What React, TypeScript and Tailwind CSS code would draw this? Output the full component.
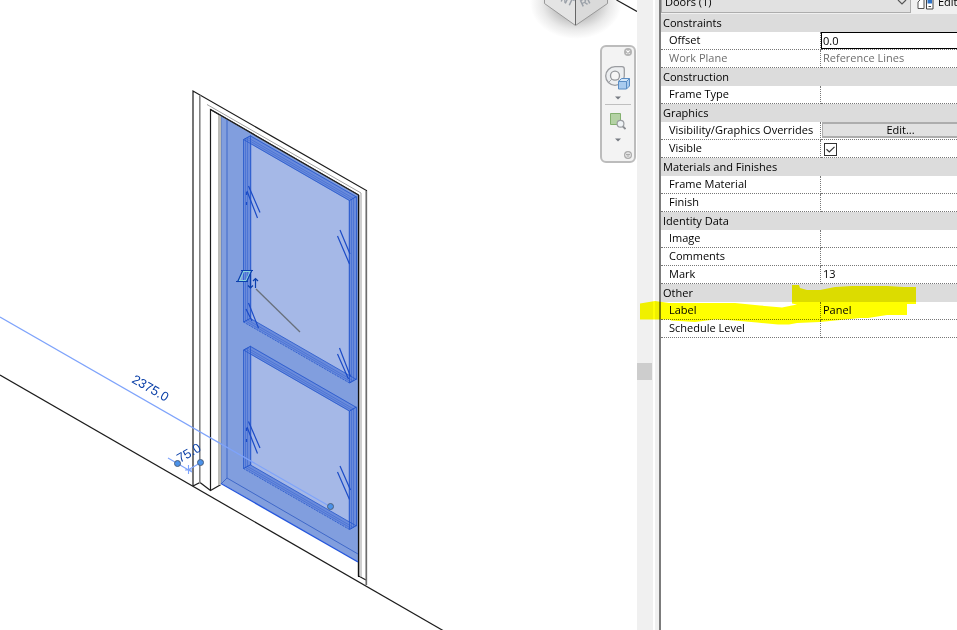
import { useState } from "react";
import clsx from "clsx";

type Row = {
  label: string;
  value?: string;
  kind?: "text" | "button" | "checkbox";
  active?: boolean;
  disabled?: boolean;
};

const groups: { title: string; rows: Row[] }[] = [
  {
    title: "Constraints",
    rows: [
      { label: "Offset", value: "0.0", active: true },
      { label: "Work Plane", value: "Reference Lines", disabled: true },
    ],
  },
  { title: "Construction", rows: [{ label: "Frame Type" }] },
  {
    title: "Graphics",
    rows: [
      { label: "Visibility/Graphics Overrides", value: "Edit...", kind: "button" },
      { label: "Visible", kind: "checkbox" },
    ],
  },
  {
    title: "Materials and Finishes",
    rows: [{ label: "Frame Material" }, { label: "Finish" }],
  },
  {
    title: "Identity Data",
    rows: [
      { label: "Image" },
      { label: "Comments" },
      { label: "Mark", value: "13" },
    ],
  },
  {
    title: "Other",
    rows: [{ label: "Label", value: "Panel" }, { label: "Schedule Level" }],
  },
];

// One glazed opening of the door, given by the heights of its left corners.
function GlassPane({ top, bottom }: { top: number; bottom: number }) {
  const insets = [0, 2, 4, 7];
  return (
    <g fill="none" stroke="#2456cc" strokeWidth="1">
      <path
        d={`M243.5 ${top}L251 ${top - 4}L356.5 ${top + 57}V${bottom + 57}L349.5 ${bottom + 61}L243.5 ${bottom}Z`}
        fill="#6a8bdb"
        stroke="none"
      />
      <path
        d={`M251.5 ${top + 5}L348.5 ${top + 61}V${bottom + 53}L251.5 ${bottom - 3}Z`}
        fill="#a5b8e7"
        stroke="none"
      />
      {insets.map((n) => (
        <g key={n} strokeOpacity={n === 0 || n === 7 ? 0.8 : 0.4}>
          <path d={`M${243.5 + n} ${top - n / 2}V${bottom - n / 2}`} />
          <path d={`M${349.5 + n} ${top + 61 - n / 2}V${bottom + 61 - n / 2}`} />
          <path d={`M${243.5 + n} ${top - n / 2}L${349.5 + n} ${top + 61 - n / 2}`} />
          <path
            d={`M${243.5 + n} ${bottom - n / 2}L${349.5 + n} ${bottom + 61 - n / 2}`}
            strokeDasharray={n === 0 ? "2 1" : undefined}
          />
        </g>
      ))}
      <path
        d={`M243.5 ${top}L251 ${top - 4}M349.5 ${top + 61}L356.5 ${top + 57}M243.5 ${bottom}L251 ${bottom - 4}M349.5 ${bottom + 61}L356.5 ${bottom + 57}`}
      />
    </g>
  );
}

function DoorView() {
  return (
    <svg
      className="absolute inset-0 h-full w-full"
      fontFamily="'Liberation Sans', Arial, sans-serif"
      role="img"
      aria-label="Door in 3D view"
    >
      <g fill="none" stroke="#1c1c1c" strokeWidth="1.2">
        <path d="M0 375L443 630.5" />
        <path d="M616.5 0L637 11.5" />
        <path d="M193 486V91L366.5 190.5V585" />
        <path d="M210.5 490V109.5L358.5 195V576L366 580" />
        <path d="M193 486L200 482.5L210.5 490.5L221 484.5" />
      </g>
      <path d="M199.8 95V483" stroke="#858585" strokeWidth="1.6" />
      <path d="M207 104.5L361 193V577" stroke="#a0a0a0" fill="none" />
      <path d="M366.2 191V585" stroke="#777" strokeWidth="1.4" />
      <path d="M219.5 115V485" stroke="#bcbcb8" strokeWidth="3" />

      <path d="M221 116L358 195V562L221 483Z" fill="#819ede" />
      <path d="M221.5 117V483" stroke="#6d8bc9" />
      <path d="M358.6 195V577" stroke="#111" strokeWidth="1.4" />
      <path d="M210.5 109.5L358.5 195" stroke="#222" strokeWidth="1.3" />
      <g fill="none" stroke="#3f68c8">
        <path d="M227 120V478L358 554" />
        <path d="M221 484L227 478" />
      </g>
      <path d="M221 483.5L358 562" stroke="#2456dc" strokeWidth="1.4" />

      <GlassPane top={139.5} bottom={322} />
      <GlassPane top={350} bottom={468.5} />

      {/* glass hatch */}
      <g stroke="#1b4bc6" strokeWidth="1.2">
        <path d="M248.5 186L260 212.5M247 191L257.5 218M246.5 192V195M246.5 202V205" />
        <path d="M340 230L350 254M337.5 236L349.5 264" />
        <path d="M248.5 303L258.5 328M246 309L252 321" />
        <path d="M339.5 348L350.5 376.5M337.5 354L348.5 379" />
        <path d="M248.5 421.5L260 448M247 427L257.5 453.5M246.5 428V431M246.5 439V442" />
        <path d="M340 466L350.5 490M337.5 472L349.5 499.5" />
      </g>

      {/* flip control and swing line */}
      <path d="M256 289L300 332" stroke="#68707c" strokeWidth="1.3" />
      <g fill="none" stroke="#0a3fae" strokeWidth="1.2">
        <path d="M243.5 271.5H250.5L246 280.5H239.5Z" stroke="#8ad4dc" />
        <path d="M241 270.5H253M236 281.5H248M242.5 271L237.5 282M252 270L246.5 282" />
        <path d="M250.5 274V288M248 285.5L250.5 288L253 285.5" />
        <path d="M255.5 288V278.5M253 281L255.5 278.5L258 281" />
      </g>

      {/* temporary dimensions */}
      <g fill="none" stroke="#7ea3fb" strokeWidth="1.1">
        <path d="M0 317L330 506.5" />
        <path d="M168 458L192 472M188 470L200 463M188.5 465V474M185 470H192" />
      </g>
      <g fill="#4b92ea" stroke="#4d617d">
        <circle cx="177.5" cy="463.5" r="3" />
        <circle cx="200.5" cy="462.5" r="3" />
        <circle cx="330.5" cy="506.5" r="3" />
      </g>
      <g fill="#0b40a8" fontSize="13">
        <text transform="translate(131 382) rotate(30)">2375.0</text>
        <text transform="translate(180 463) rotate(-30)">75.0</text>
      </g>

      {/* view cube */}
      <defs>
        <radialGradient id="cubeShadow">
          <stop offset="0.4" stopColor="#888" stopOpacity="0.6" />
          <stop offset="0.75" stopColor="#999" stopOpacity="0.2" />
          <stop offset="1" stopColor="#999" stopOpacity="0" />
        </radialGradient>
      </defs>
      <ellipse cx="576" cy="3" rx="46" ry="36" fill="url(#cubeShadow)" />
      <path d="M544.5 -1V3.5L575.5 25.5V-1Z" fill="#e4e4e4" />
      <path d="M607.5 -1V3.5L575.5 25.5V-1Z" fill="#dadada" />
      <path d="M544.5 0V3.5L575.5 25.5L607.5 3.5V0" fill="none" stroke="#999" />
      <path d="M575.5 0V25" stroke="#666" />
      <g fill="#9aa0a8" fontSize="10" fontWeight="bold">
        <text transform="translate(560 1) rotate(25)">NT</text>
        <text transform="translate(582 7) rotate(-25)">RI</text>
      </g>
    </svg>
  );
}

function DownArrow() {
  return (
    <svg className="h-1 w-1.5" viewBox="0 0 6 4" aria-hidden="true">
      <path d="M0 0.5H6L3 3.5Z" fill="#777b82" />
    </svg>
  );
}

function NavigationBar() {
  return (
    <nav className="absolute top-[45px] right-px flex h-[118px] w-9 flex-col items-center rounded-md border-2 border-[#bcbcbc] bg-[#f3f3f3]">
      <button aria-label="Close" className="mt-px mr-0.5 self-end">
        <svg className="size-2" viewBox="0 0 8 8">
          <circle cx="4" cy="4" r="4" fill="#b4b4b4" />
          <path d="M2.4 2.4L5.6 5.6M5.6 2.4L2.4 5.6" stroke="#fff" strokeWidth="1.1" />
        </svg>
      </button>
      <button aria-label="Steering wheel" className="mt-2.5">
        <svg className="h-6 w-[26px]" viewBox="0 0 26 24" fill="none">
          <path d="M10 0.7H17Q19.3 0.7 19.3 3V10A9.3 9.3 0 1 1 10 0.7Z" fill="#eceef0" stroke="#9a9ca0" strokeWidth="1.3" />
          <circle cx="10" cy="9.7" r="4.5" fill="#f6f6f6" stroke="#96989c" strokeWidth="1.3" />
          <path d="M7 13L4 16M13 13L15 16" stroke="#a5a7aa" />
          <path d="M13.5 15.5L16.5 12.5H24.5V20L21.5 23H13.5Z" fill="#a9cbee" stroke="#5a8dc4" />
          <path d="M14.5 15L17 13H23.5L21.5 15Z" fill="#d5e7f8" />
          <path d="M13.5 15.5H21.5V23M21.5 15.5L24.5 12.5" stroke="#5a8dc4" />
        </svg>
      </button>
      <button aria-label="Steering wheel options" className="mt-1.5 flex">
        <DownArrow />
      </button>
      <hr className="mt-1 w-[26px] border-[#bfbfbf]" />
      <button aria-label="Zoom" className="mt-2">
        <svg className="h-[17px] w-4" viewBox="0 0 16 17" fill="none">
          <path d="M0.5 0.5H10.5V11.5H0.5Z" fill="#b4d2a4" stroke="#83b06f" />
          <path d="M12.5 13L15.5 16" stroke="#8b8e92" strokeWidth="1.8" />
          <circle cx="10.5" cy="10.8" r="3.4" fill="#eef2f5" stroke="#9a9da1" strokeWidth="1.2" />
        </svg>
      </button>
      <button aria-label="Zoom options" className="mt-2 flex">
        <DownArrow />
      </button>
      <button aria-label="Customize" className="mt-auto mr-0.5 mb-0.5 self-end">
        <svg className="size-2" viewBox="0 0 8 8">
          <circle cx="4" cy="4" r="3.4" fill="#ededed" stroke="#aaa" strokeWidth="1.2" />
          <path d="M2 3.4H6M2.6 5H5.4" stroke="#999" strokeWidth="0.9" />
        </svg>
      </button>
    </nav>
  );
}

function ValueCell({ row }: { row: Row }) {
  const [checked, setChecked] = useState(true);

  if (row.kind === "button") {
    return (
      <button
        id={row.label}
        className="ml-px block h-4 w-full border-t-2 border-b-2 border-l border-[#adadad] bg-[#e1e1e1] text-center leading-3"
      >
        {row.value}
      </button>
    );
  }
  if (row.kind === "checkbox") {
    return (
      <span className="grid h-4 items-end justify-items-start pl-[3px]">
        <input
          id={row.label}
          type="checkbox"
          checked={checked}
          onChange={() => setChecked(!checked)}
          className="col-start-1 row-start-1 size-[13px] appearance-none border border-[#333] bg-white"
        />
        {checked && (
          <svg className="pointer-events-none col-start-1 row-start-1 size-[13px]" viewBox="0 0 13 13">
            <path d="M2.5 6.3L5.3 9L10.5 3.8" fill="none" stroke="#333" strokeWidth="1.2" />
          </svg>
        )}
      </span>
    );
  }
  return (
    <input
      id={row.label}
      defaultValue={row.value}
      disabled={row.disabled}
      className={clsx(
        "block w-full bg-transparent outline-none",
        row.active
          ? "h-[17px] border border-black bg-white px-px pb-px"
          : "h-4 px-0.5",
        row.disabled && "text-[#6d6d6d]"
      )}
    />
  );
}

function PropertiesPalette() {
  return (
    <section className="min-w-0 flex-1 overflow-hidden border-l-2 border-[#7c7c7c] bg-white">
      <div className="flex h-3.5 items-end overflow-hidden bg-[#f0f0f0]">
        <div className="mb-px grid w-[250px] shrink-0 items-center">
          <select
            aria-label="Type filter"
            className="col-start-1 row-start-1 h-[22px] appearance-none border border-[#adadad] bg-[#e1e1e1] px-[3px]"
          >
            <option>Doors (1)</option>
          </select>
          <svg
            className="pointer-events-none col-start-1 row-start-1 mr-1 h-1.5 w-2.5 justify-self-end"
            viewBox="0 0 10 6"
          >
            <path d="M1 1L5 5L9 1" fill="none" stroke="#555" strokeWidth="1.2" />
          </svg>
        </div>
        <button className="ml-1.5 flex h-6 items-center gap-1 whitespace-nowrap">
          <svg className="h-4 w-[17px]" viewBox="0 0 17 16" fill="none">
            <path d="M1 8L4 5H7V14.5H1Z" fill="#fff" stroke="#555" />
            <path d="M9.5 2.5H16V15H9.5Z" fill="#fff" stroke="#444" />
            <path d="M10.5 6H15V9.5H10.5Z" fill="#2f74c8" />
            <path d="M11.5 12.5H14" stroke="#444" />
          </svg>
          Edit Type
        </button>
      </div>

      {/* the value column runs on past the palette's edge */}
      <table className="w-[calc(100%+20px)] table-fixed border-separate border-spacing-0">
        <colgroup>
          <col className="w-40" />
          <col />
        </colgroup>
        {groups.map((group) => (
          <tbody key={group.title}>
            <tr>
              <th
                colSpan={2}
                className="h-[18px] bg-[#dcdcdc] p-0 pl-0.5 text-left font-normal"
              >
                {group.title}
              </th>
            </tr>
            {group.rows.map((row) => (
              <tr key={row.label}>
                <td className="h-[18px] border-r border-b border-dotted border-[#777] p-0 pl-2 align-top whitespace-nowrap">
                  <label
                    htmlFor={row.label}
                    className={clsx("block", row.disabled && "text-[#6d6d6d]")}
                  >
                    {row.label}
                  </label>
                </td>
                <td className="h-[18px] border-b border-dotted border-[#777] p-0 align-top">
                  <ValueCell row={row} />
                </td>
              </tr>
            ))}
          </tbody>
        ))}
      </table>
    </section>
  );
}

function Highlighter() {
  return (
    <svg
      className="pointer-events-none absolute top-[285px] left-[3px] h-10 w-[276px] mix-blend-multiply"
      viewBox="0 0 276 40"
      aria-hidden="true"
    >
      <path
        fill="#ff0"
        d="M152 0H159L160 3L167 5H180L195 2L212 1H247L264 2H276V19H267V30H247L228 33H220L195 35.5L180 37L157 38L149 39.5H138L117 37.5L88 35L75 34.5L55 37L31 35.5L30 34.5H0V18.5L15 16L29 18H95L120 20.5L142 22.5L157 19.5L152 18.5Z"
      />
    </svg>
  );
}

export default function App() {
  return (
    <div className="flex min-h-screen overflow-hidden bg-white font-['Open_Sans','Noto_Sans',sans-serif] text-[11px] leading-4 text-black">
      <main className="relative min-w-0 flex-1 overflow-hidden">
        <DoorView />
        <NavigationBar />
      </main>
      <aside className="relative flex w-80 shrink-0">
        <div className="w-4 bg-[#f0f0f0]">
          <div className="mt-[363px] h-[17px] w-[15px] bg-[#cdcdcd]" />
        </div>
        <div className="ml-0.5 w-1 bg-[#f0f0f0]" />
        <PropertiesPalette />
        <Highlighter />
      </aside>
    </div>
  );
}
